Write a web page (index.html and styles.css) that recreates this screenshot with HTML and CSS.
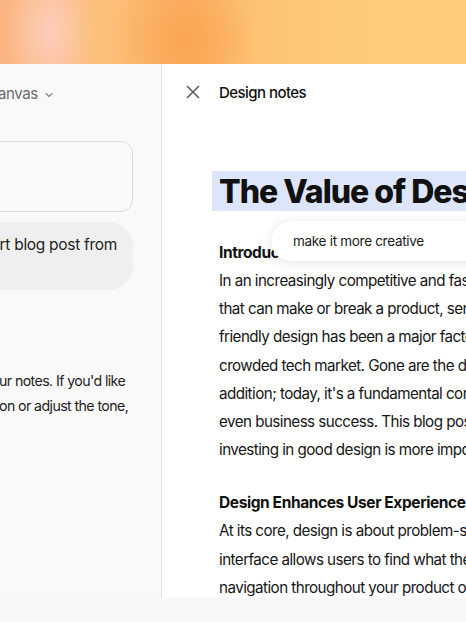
FILE: index.html
```html
<!DOCTYPE html>
<html lang="en">
<head>
  <meta charset="UTF-8" />
  <meta name="viewport" content="width=device-width, initial-scale=1.0"/>
  <title>Design notes</title>
  <link rel="stylesheet" href="styles.css">
</head>
<body>

  <div class="banner"></div>

  <div class="main">
    <!-- Chat side -->
    <aside class="side">
      <div class="side-head">
        <span class="model">anvas</span>
        <svg class="chev" width="10" height="10" viewBox="0 0 10 10"><path d="M2 3.5 L5 6.5 L8 3.5" fill="none" stroke="#8a8a8a" stroke-width="1.2" stroke-linecap="round" stroke-linejoin="round"/></svg>
      </div>
      <div class="prompt-box"></div>
      <div class="bubble">
        <p>rt blog post from</p>
      </div>
      <div class="reply">
        <p>ur notes. If you'd like</p>
        <p>on or adjust the tone,</p>
      </div>
    </aside>

    <!-- Document -->
    <section class="doc">
      <div class="doc-head">
        <svg class="close" width="14" height="14" viewBox="0 0 14 14"><path d="M1.5 1.5 L12.5 12.5 M12.5 1.5 L1.5 12.5" stroke="#5d5d5d" stroke-width="1.6" stroke-linecap="round"/></svg>
        <span class="doc-title">Design notes</span>
      </div>

      <article class="article">
        <h1><span class="sel">The Value of Design in Tech</span></h1>

        <div class="ask">make it more creative</div>

        <h3>Introduction</h3>
        <p>In an increasingly competitive and fast-paced</p>
        <p>that can make or break a product, service,</p>
        <p>friendly design has been a major factor in</p>
        <p>crowded tech market. Gone are the days</p>
        <p>addition; today, it's a fundamental component</p>
        <p>even business success. This blog post explores</p>
        <p>investing in good design is more important</p>

        <h3 class="gap">Design Enhances User Experience</h3>
        <p>At its core, design is about problem-solving.</p>
        <p>interface allows users to find what they need</p>
        <p>navigation throughout your product or service</p>
      </article>
    </section>
  </div>

  <div class="footer"></div>

</body>
</html>
```

FILE: styles.css
```css
* {
  margin: 0;
  padding: 0;
  box-sizing: border-box;
  font-family: 'Inter', 'Liberation Sans', sans-serif;
}

body {
  width: 466px;
  height: 622px;
  overflow: hidden;
  background: #f7f7f7;
  color: #111;
}

.banner {
  height: 64px;
  background:
    radial-gradient(ellipse 45px 80px at 50px 32px, rgba(253, 206, 188, 1), rgba(253, 206, 188, 0) 100%),
    radial-gradient(ellipse 70px 70px at 185px 40px, rgba(249, 164, 78, 0.85), rgba(249, 164, 78, 0) 100%),
    linear-gradient(90deg, #fbb583 0%, #fcc07c 22%, #fbb264 40%, #fdc273 55%, #fdca7a 75%, #fdcc7c 100%);
}

.main {
  display: flex;
  height: 534px;
}

/* chat side */
.side {
  width: 162px;
  flex-shrink: 0;
  background: #f9f9f9;
  border-right: 1px solid #e2e2e2;
  overflow: hidden;
  padding-right: 28px;
}

.side-head {
  height: 56px;
  display: flex;
  align-items: center;
  gap: 6px;
  padding-top: 3px;
}

.model {
  font-size: 15px;
  color: #6a6a6a;
  letter-spacing: -0.4px;
  margin-left: -2px;
}

.chev {
  margin-top: 2px;
}

.prompt-box {
  margin-top: 21px;
  margin-left: -60px;
  height: 71px;
  border: 1px solid #dcdcdc;
  border-radius: 12px;
  background: #f9f9f9;
}

.bubble {
  margin-top: 10px;
  margin-left: -60px;
  height: 68px;
  border-radius: 24px;
  background: #efefef;
  padding: 10px 16px 0 0;
  text-align: right;
  font-size: 15.5px;
  line-height: 26px;
  letter-spacing: -0.3px;
  color: #1d1d1d;
}

.bubble p {
  white-space: nowrap;
}

.reply {
  margin-top: 78px;
  font-size: 14.2px;
  line-height: 25px;
  letter-spacing: -0.6px;
  color: #1d1d1d;
}

.reply p {
  white-space: nowrap;
  margin-left: -1px;
}

/* document */
.doc {
  flex: 1;
  background: #fff;
  overflow: hidden;
}

.doc-head {
  height: 56px;
  display: flex;
  align-items: center;
  padding-left: 24px;
}

.close {
  flex-shrink: 0;
}

.doc-title {
  margin-left: 19px;
  font-size: 15px;
  font-weight: 500;
  color: #111;
  letter-spacing: -0.55px;
}

.article {
  position: relative;
  padding: 52px 0 0 57px;
  width: 520px;
}

.article h1 {
  font-size: 32px;
  font-weight: 800;
  letter-spacing: -1px;
  line-height: 40px;
  margin-left: -7px;
  margin-bottom: 27px;
  white-space: nowrap;
}

.sel {
  background: #dce5f9;
  padding: 1px 7px 0;
}

.article h3 {
  font-size: 15.5px;
  font-weight: 700;
  line-height: 28px;
  letter-spacing: -0.4px;
  white-space: nowrap;
}

.article h3.gap {
  margin-top: 25px;
}

.article p {
  font-size: 15.2px;
  line-height: 28.2px;
  letter-spacing: -0.55px;
  white-space: nowrap;
  color: #161616;
}

.ask {
  position: absolute;
  left: 109px;
  top: 101px;
  width: 300px;
  height: 40px;
  display: flex;
  align-items: center;
  padding-left: 22px;
  background: #fff;
  border-radius: 20px;
  box-shadow: 0 2px 12px rgba(0, 0, 0, 0.10), 0 0 1px rgba(0, 0, 0, 0.12);
  font-size: 13.5px;
  letter-spacing: -0.3px;
  color: #1a1a1a;
}

.footer {
  height: 24px;
  background: #f7f7f7;
}
```
